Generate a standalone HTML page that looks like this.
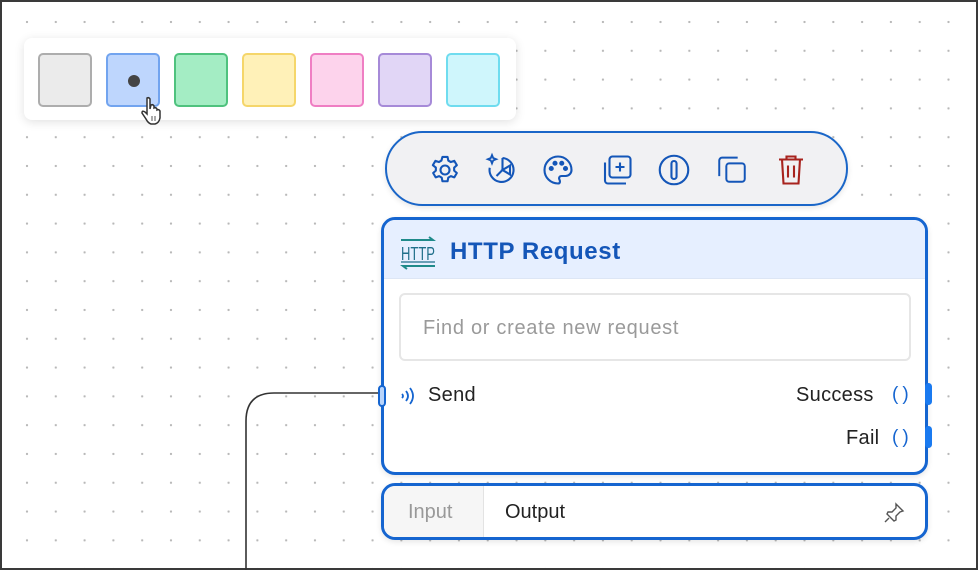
<!DOCTYPE html>
<html><head><meta charset="utf-8"><style>
*{box-sizing:border-box;margin:0;padding:0}
body{width:978px;height:570px;overflow:hidden;font-family:"Liberation Sans",sans-serif;background:#fff;position:relative}
.frame{position:absolute;left:0;top:0;width:978px;height:570px;border:2px solid #3a3a3a;
background-color:#fff;background-image:radial-gradient(circle,#b8b8b8 1px,transparent 1.3px);background-size:28.8px 28.8px;background-position:10.6px 5.6px}
.pal{position:absolute;left:24px;top:38px;width:492px;height:82px;background:#fff;border-radius:8px;box-shadow:0 2px 10px rgba(0,0,0,.12)}
.sw{position:absolute;top:15px;width:54px;height:54px;border-radius:5px;border:2px solid}
.tb{position:absolute;left:385px;top:131px;width:463px;height:75px;border:2px solid #1a66c8;border-radius:38px;background:#f1f1f3;box-shadow:0 2px 6px rgba(0,0,0,.1)}
.tb svg{position:absolute;top:19px}
.node{position:absolute;left:381px;top:217px;width:547px;height:258px;border:3px solid #1565d0;border-radius:14px;background:#fff;overflow:visible;box-shadow:0 2px 6px rgba(0,0,0,.1)}
.hd{height:59px;background:#e6efff;border-radius:11px 11px 0 0;border-bottom:1px solid #dde6f5}
.title{position:absolute;left:66px;top:18px;font-size:24px;font-weight:bold;color:#1456b8;letter-spacing:0.6px}
.inp{position:absolute;left:15px;top:73px;width:512px;height:68px;border:2px solid #e6e6e6;border-radius:6px;font-size:20px;color:#9a9a9a;padding:22px 0 0 22px;letter-spacing:0.7px}
.lbl{position:absolute;font-size:20px;color:#222;letter-spacing:0.3px}
.par{position:absolute;font-size:19px;color:#1565d0;letter-spacing:4px}
.port{position:absolute;width:7px;height:22px;border-radius:4px;background:#1a7af0}
.io{position:absolute;left:381px;top:483px;width:547px;height:57px;border:3px solid #1565d0;border-radius:14px;background:#fff;box-shadow:0 2px 6px rgba(0,0,0,.1)}
</style></head><body>
<div class="frame"></div>
<svg style="position:absolute;left:0;top:0" width="978" height="570"><path d="M380 393 H274 Q246 393 246 421 V570" fill="none" stroke="#333" stroke-width="1.6"/></svg>

<div class="pal">
<div class="sw" style="left:14px;background:#ebebeb;border-color:#adadad"></div>
<div class="sw" style="left:82px;background:#bed6fd;border-color:#72a4ef"><div style="position:absolute;left:20px;top:20px;width:12px;height:12px;border-radius:50%;background:#444"></div></div>
<div class="sw" style="left:150px;background:#a4edc4;border-color:#4fc27e"></div>
<div class="sw" style="left:218px;background:#fff1b8;border-color:#f5d66a"></div>
<div class="sw" style="left:286px;background:#fdd3ec;border-color:#ef7ec3"></div>
<div class="sw" style="left:354px;background:#e1d6f6;border-color:#a68ad8"></div>
<div class="sw" style="left:422px;background:#cff6fc;border-color:#6fdcef"></div>
<svg style="position:absolute;left:116px;top:58px" width="26" height="30" viewBox="0 0 26 30"><path d="M7 2 Q9 1 10 3 V13 L11 9 Q13 8 14 10 L14 12 Q16 11 17 13 L17 14 Q19 13 20 15 V22 Q19 27 15 28 H11 Q8 27 6 23 L2 17 Q2 14 5 16 L7 18 Z" fill="#fff" stroke="#333" stroke-width="1.5"/><path d="M12 20v5M15 20v5" stroke="#555"/></svg>
</div>

<div class="tb">
<svg style="left:40px" width="36" height="36" viewBox="0 0 24 24" fill="none" stroke="#1456b8" stroke-width="1.4" stroke-linejoin="round"><path d="M10.3 3.3h3.4l.5 2.4 1.7 1 2.3-.8 1.7 2.9-1.8 1.6v2l1.8 1.6-1.7 2.9-2.3-.8-1.7 1-.5 2.4h-3.4l-.5-2.4-1.7-1-2.3.8-1.7-2.9 1.8-1.6v-2L3.9 8.8l1.7-2.9 2.3.8 1.7-1z"/><circle cx="12" cy="12" r="3"/></svg>
<svg style="left:96px" width="36" height="36" viewBox="0 0 24 24" fill="none" stroke="#1456b8" stroke-width="1.4"><path d="M13 4a8 8 0 1 1-8.5 6.5"/><path d="M13 4v8l-4 4"/><path d="M13 12l5-3v6z"/><path d="M6 2l.8 2 2 .8-2 .8L6 7.6l-.8-2-2-.8 2-.8z" stroke-width="1.2"/></svg>
<svg style="left:153px" width="36" height="36" viewBox="0 0 24 24" fill="none" stroke="#1456b8" stroke-width="1.4"><path d="M12 3a9 9 0 1 0 0 18c1.5 0 1.5-1.5 1-2.5-.7-1.3 0-2.5 1.5-2.5H17a4 4 0 0 0 4-4c0-5-4-9-9-9z"/><circle cx="7.5" cy="11" r="1" fill="#1456b8"/><circle cx="10" cy="7.5" r="1" fill="#1456b8"/><circle cx="14.5" cy="7.5" r="1" fill="#1456b8"/><circle cx="17" cy="11" r="1" fill="#1456b8"/></svg>
<svg style="left:212px" width="36" height="36" viewBox="0 0 24 24" fill="none" stroke="#1456b8" stroke-width="1.4"><rect x="7" y="3" width="14" height="14" rx="2"/><path d="M4 7v12a2 2 0 0 0 2 2h12M14 7v6M11 10h6"/></svg>
<svg style="left:269px" width="36" height="36" viewBox="0 0 24 24" fill="none" stroke="#1456b8" stroke-width="1.4"><circle cx="12" cy="12" r="9.5"/><rect x="10.3" y="6" width="3.4" height="12" rx="1.7"/></svg>
<svg style="left:328px" width="34" height="34" viewBox="0 0 24 24" fill="none" stroke="#1456b8" stroke-width="1.4"><rect x="8" y="8" width="13" height="13" rx="2"/><path d="M16 4H5a2 2 0 0 0-2 2v11"/></svg>
<svg style="left:386px" width="36" height="36" viewBox="0 0 24 24" fill="none" stroke="#a8231e" stroke-width="1.4"><path d="M4 5h16M9 5V3h6v2M6 5l1 16h10l1-16M10 9v8M14 9v8"/></svg>
</div>

<div class="node">
<div class="hd"></div>
<svg style="position:absolute;left:14px;top:15px" width="40" height="36" viewBox="0 0 40 36"><path d="M3 5h32l-4-3M37 31H5l4 3" fill="none" stroke="#1f8a8a" stroke-width="2"/><text x="3" y="25" font-family="Liberation Sans Narrow,Liberation Sans,sans-serif" font-size="18" fill="#1f6f8a" textLength="34" lengthAdjust="spacingAndGlyphs">HTTP</text><path d="M3 27h34" stroke="#1f6f8a" stroke-width="1.2"/></svg>
<div class="title">HTTP Request</div>
<div class="inp">Find or create new request</div>
<svg style="position:absolute;left:15px;top:166px" width="16" height="20" viewBox="0 0 16 20" fill="none" stroke="#1565d0" stroke-width="1.8"><path d="M3 8q2 2 0 4M7 5q4 5 0 10M11 2q6 8 0 16"/></svg>
<div class="lbl" style="left:44px;top:164px">Send</div>
<div class="lbl" style="left:412px;top:164px">Success</div>
<div class="par" style="left:508px;top:164px">()</div>
<div class="lbl" style="left:462px;top:207px">Fail</div>
<div class="par" style="left:508px;top:207px">()</div>
<div class="port" style="left:-6px;top:165px;background:#b8d4fb;border:2px solid #1565d0;width:8px"></div>
<div class="port" style="left:541px;top:163px"></div>
<div class="port" style="left:541px;top:206px"></div>
</div>

<div class="io">
<div style="position:absolute;left:0;top:0;width:100px;height:51px;background:#f6f6f6;border-right:1px solid #e3e3e3;border-radius:11px 0 0 11px"></div>
<div style="position:absolute;left:24px;top:15px;font-size:20px;color:#999">Input</div>
<div style="position:absolute;left:121px;top:15px;font-size:20px;color:#222">Output</div>
<svg style="position:absolute;left:498px;top:15px" width="24" height="24" viewBox="0 0 24 24" fill="none" stroke="#555" stroke-width="1.4"><path d="M14 3l7 7-3 1-4 4 0 4-2 1-7-7 1-2h4l4-4z"/><path d="M7 17l-4 4"/></svg>
</div>
</body></html>
